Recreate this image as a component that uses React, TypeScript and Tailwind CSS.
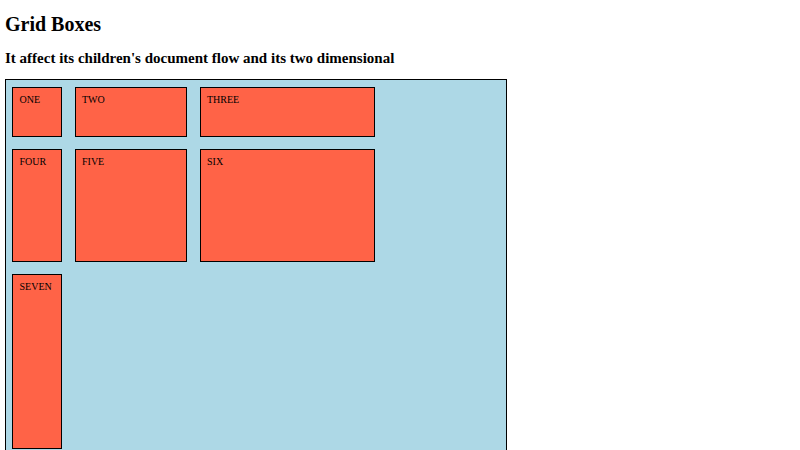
import React from 'react';

const labels = ['ONE', 'TWO', 'THREE', 'FOUR', 'FIVE', 'SIX', 'SEVEN'];

const App: React.FC = () => {
  return (
    <div className="px-[5px] pt-[13.4px] font-['Liberation_Serif',serif] text-black">
      <h1 className="text-[20px] leading-[23px] font-bold">Grid Boxes</h1>
      <h2 className="mt-[13.4px] text-[15px] leading-[17.25px] font-bold">
        It affect its children's document flow and its two dimensional
      </h2>

      {/* Grid container */}
      <div className="mt-[12.45px] w-[502px] border border-black bg-[#add8e6] p-[6.25px] grid grid-cols-[50px_112.5px_175px] grid-rows-[50px_112.5px_175px] gap-[12.5px]">
        {labels.map((label) => (
          <div
            key={label}
            className="border-[1.25px] border-black bg-[#ff6347] p-[6.25px] text-[10px] leading-[11.5px]"
          >
            {label}
          </div>
        ))}
      </div>
    </div>
  );
};

export default App;
